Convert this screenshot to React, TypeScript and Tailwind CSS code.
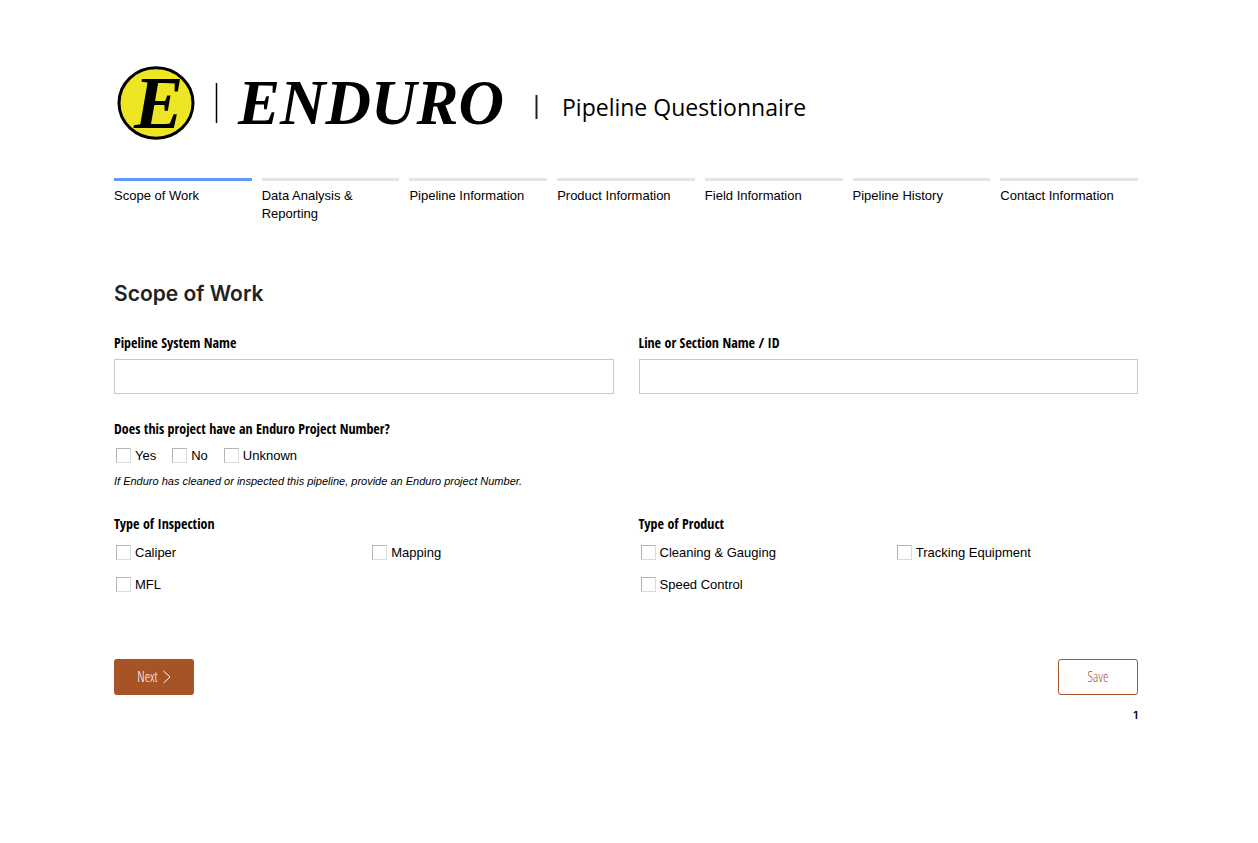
import { ReactNode } from "react"

const STEPS = [
    "Scope of Work",
    "Data Analysis & Reporting",
    "Pipeline Information",
    "Product Information",
    "Field Information",
    "Pipeline History",
    "Contact Information",
]

const CONDENSED = "font-['Open_Sans_Condensed','Liberation_Sans_Narrow','Open_Sans',sans-serif]"
const CONDENSED_LIGHT = "font-['Open_Sans_Condensed_Light','Open_Sans_Condensed','Liberation_Sans_Narrow',sans-serif]"

function Logo() {
    return (
        <header className="flex items-start h-[78px] pl-[3px]">
            <svg className="overflow-visible" width="700" height="86" viewBox="0 0 700 86" role="img" aria-label="Enduro Pipeline Questionnaire">
                <ellipse cx="39" cy="39" rx="37" ry="35.2" fill="#ede624" stroke="#000" strokeWidth="3" />
                <text x="17" y="64" fontFamily="Liberation Serif, serif" fontSize="74" fontWeight="bold" fontStyle="italic">E</text>
                <path d="M99.5 19v40" stroke="#000" strokeWidth="1.5" />
                <text x="121" y="60" fontFamily="Liberation Serif, serif" fontSize="63" fontWeight="bold" fontStyle="italic">ENDURO</text>
                <path d="M419.5 31v24" stroke="#222" strokeWidth="2" />
                <text x="445" y="52" fontFamily="Open Sans, Noto Sans, sans-serif" fontSize="23">Pipeline Questionnaire</text>
            </svg>
        </header>
    )
}

function TextField({ id, label }: { id: string; label: string }) {
    return (
        <div>
            <label htmlFor={id} className={`${CONDENSED} block text-sm leading-5 font-bold`}>{label}</label>
            <input id={id} type="text" className="block w-full h-[35px] mt-1.5 px-2 border border-[#c8c8c8] bg-white outline-none" />
        </div>
    )
}

function Check({ label }: { label: string }) {
    return (
        <label className="flex items-center gap-1 pl-0.5 leading-[21px]">
            <input
                type="checkbox"
                className="appearance-none size-[15px] border border-t-[#b4b4b4] border-l-[#b4b4b4] border-b-[#dcdcdc] border-r-[#dcdcdc] bg-white checked:bg-[#a65326]"
            />
            {label}
        </label>
    )
}

function Group({ title, children }: { title: string; children: ReactNode }) {
    return (
        <fieldset>
            <legend className={`${CONDENSED} text-sm leading-5 font-bold`}>{title}</legend>
            {children}
        </fieldset>
    )
}

export default function App() {
    return (
        <main className="pl-4 pr-[22px] pt-16 bg-white text-black font-['Liberation_Sans',Arial,sans-serif] text-[13px] leading-[18px]">
            <div className="max-w-5xl mx-auto">
                <Logo />

                <nav className="mt-9 min-h-[45px]">
                    <ol className="grid grid-cols-7 gap-2.5">
                        {STEPS.map((step, i) => (
                            <li
                                key={step}
                                aria-current={i === 0 ? "step" : undefined}
                                className={`border-t-3 pt-[6px] pr-4 ${i === 0 ? "border-[#6299f8]" : "border-[#e4e4e4]"}`}
                            >
                                {step}
                            </li>
                        ))}
                    </ol>
                </nav>

                <form onSubmit={(e) => e.preventDefault()}>
                    <h1 className="mt-14 font-['Inter',sans-serif] text-[21px] leading-[30px] font-semibold text-[#222]">Scope of Work</h1>

                    <div className="grid grid-cols-2 gap-x-[25px] mt-6">
                        <TextField id="system" label="Pipeline System Name" />
                        <TextField id="section" label="Line or Section Name / ID" />
                    </div>

                    <div className="mt-[25px]">
                        <Group title="Does this project have an Enduro Project Number?">
                            <div className="flex gap-[14px] mt-1.5">
                                <Check label="Yes" />
                                <Check label="No" />
                                <Check label="Unknown" />
                            </div>
                            <p className="mt-1.5 text-[11px] italic">If Enduro has cleaned or inspected this pipeline, provide an Enduro project Number.</p>
                        </Group>
                    </div>

                    <div className="grid grid-cols-2 gap-x-[25px] mt-6">
                        <Group title="Type of Inspection">
                            <div className="grid grid-cols-2 gap-x-[13px] gap-y-[11px] mt-2">
                                <Check label="Caliper" />
                                <Check label="Mapping" />
                                <Check label="MFL" />
                            </div>
                        </Group>
                        <Group title="Type of Product">
                            <div className="grid grid-cols-2 gap-x-[13px] gap-y-[11px] mt-2">
                                <Check label="Cleaning & Gauging" />
                                <Check label="Tracking Equipment" />
                                <Check label="Speed Control" />
                            </div>
                        </Group>
                    </div>

                    <div className="flex justify-between mt-16">
                        <button type="submit" className={`${CONDENSED_LIGHT} flex items-center justify-center gap-1 w-20 h-9 rounded-[3px] bg-[#a65326] text-white text-sm font-light`}>
                            Next
                            <svg width="9" height="14" viewBox="0 0 9 14" fill="none" stroke="currentColor" strokeWidth="1">
                                <path d="M1.5 1l6.5 6-6.5 6" />
                            </svg>
                        </button>
                        <button type="button" className={`${CONDENSED_LIGHT} w-20 h-9 rounded-[3px] border border-[#a65326] bg-white text-[#a65326] text-sm font-light`}>
                            Save
                        </button>
                    </div>
                </form>

                <p className="mt-[11px] text-right font-['Inter',sans-serif] text-[11px] font-semibold">1</p>
            </div>
        </main>
    )
}
